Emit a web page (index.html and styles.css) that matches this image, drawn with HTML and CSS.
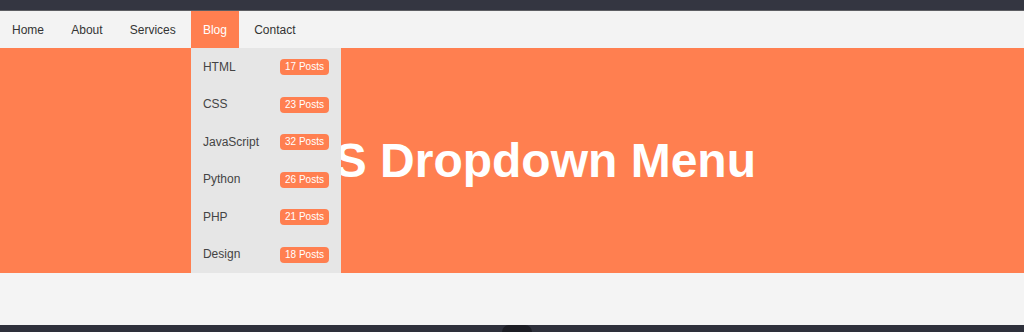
FILE: index.html
```html
<!DOCTYPE html>
<html lang="en">
<head>
<meta charset="utf-8">
<title>CSS Dropdown Menu</title>
<link rel="stylesheet" href="styles.css">
</head>
<body>
<div class="topbar"></div>
<nav class="nav">
  <ul class="menu">
    <li class="menu-item"><a href="#">Home</a></li>
    <li class="menu-item"><a href="#">About</a></li>
    <li class="menu-item"><a href="#">Services</a></li>
    <li class="menu-item active"><a href="#">Blog</a>
      <ul class="dropdown">
        <li class="drop-item"><span>HTML</span><span class="badge">17 Posts</span></li>
        <li class="drop-item"><span>CSS</span><span class="badge">23 Posts</span></li>
        <li class="drop-item"><span>JavaScript</span><span class="badge">32 Posts</span></li>
        <li class="drop-item"><span>Python</span><span class="badge">26 Posts</span></li>
        <li class="drop-item"><span>PHP</span><span class="badge">21 Posts</span></li>
        <li class="drop-item"><span>Design</span><span class="badge">18 Posts</span></li>
      </ul>
    </li>
    <li class="menu-item"><a href="#">Contact</a></li>
  </ul>
</nav>
<header class="hero">
  <h1 class="title">CSS Dropdown Menu</h1>
</header>
<div class="below"></div>
<div class="bottombar"><span class="blob"></span></div>
</body>
</html>
```
FILE: styles.css
```css
* { box-sizing: border-box; }
html, body { margin: 0; padding: 0; }
body {
  font-family: "Liberation Sans", Arial, sans-serif;
  background: #f4f4f4;
  overflow: hidden;
}
.topbar {
  height: 11px;
  background: #343641;
  border-bottom: 1px solid #5c5d62;
}
.nav {
  height: 37px;
  background: #f3f3f3;
  position: relative;
  z-index: 2;
}
.menu {
  list-style: none;
  margin: 0;
  padding: 0;
  display: flex;
  gap: 3.2px;
  height: 100%;
}
.menu-item {
  position: relative;
  height: 100%;
}
.menu-item > a {
  display: flex;
  align-items: center;
  height: 100%;
  padding: 0 12px;
  font-size: 12px;
  color: #333;
  text-decoration: none;
}
.menu-item.active > a {
  background: #ff7f50;
  color: #fff;
}
.dropdown {
  position: absolute;
  top: 100%;
  left: 0;
  width: 150px;
  margin: 0;
  padding: 0;
  list-style: none;
  background: #e6e6e6;
}
.drop-item {
  height: 37.5px;
  display: flex;
  align-items: center;
  justify-content: space-between;
  padding: 0 12px;
  font-size: 12px;
  color: #444;
}
.badge {
  background: #ff7f50;
  color: #fff;
  font-size: 10px;
  height: 16px;
  line-height: 16px;
  padding: 0 5px;
  border-radius: 4px;
  margin-top: 1px;
}
.hero {
  height: 225px;
  background: #ff7f50;
  display: flex;
  align-items: center;
  justify-content: center;
}
.title {
  margin: 0;
  font-size: 48px;
  font-weight: bold;
  color: #fff;
}
.below {
  height: 52px;
  background: #f4f4f4;
}
.bottombar {
  height: 7px;
  background: #2e303b;
  display: flex;
  justify-content: center;
}
.blob {
  width: 30px;
  height: 7px;
  margin-left: 10px;
  background: #1c1d24;
  border-radius: 12px 12px 0 0;
}
```
